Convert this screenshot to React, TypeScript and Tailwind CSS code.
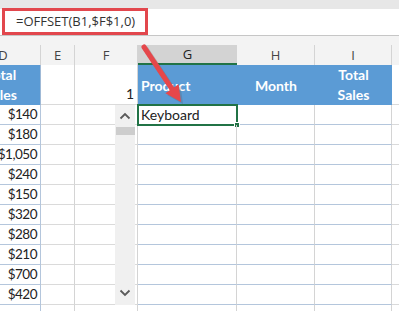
import React from 'react';

const sales = ['$140', '$180', '$1,050', '$240', '$150', '$320', '$280', '$210', '$700', '$420'];

const blueLine = 'border-b border-b-[#b4c6dc]';
const grayLine = 'border-b border-b-[#dadada]';

const App: React.FC = () => {
  return (
    <div className="relative w-[399px] h-[311px] overflow-hidden bg-white font-['Lato',sans-serif] text-[14px] text-[#222]">
      {/* Formula bar */}
      <div className="h-[36px] border-b border-[#c6c6c6] bg-[linear-gradient(#e7e7e7_0_9px,#ffffff_9px)] pt-[8px] pl-[2px]">
        <div className="w-[146px] h-[27px] border-[3px] border-[#e2474d] bg-white flex items-center pl-[11px] font-['Open_Sans',sans-serif] text-[13px] text-[#333]">
          =OFFSET(B1,$F$1,0)
        </div>
      </div>
      <div className="h-[9px] bg-[#f3f3f3]" />

      {/* Column headers */}
      <div className="flex h-[20px] bg-[#f3f3f3] font-['Open_Sans',sans-serif] text-[13px] text-[#444] leading-[20px]">
        <div className="w-[41px] overflow-hidden border-r border-[#d4d4d4]">
          <div className="w-[76px] ml-[-35px] text-center">D</div>
        </div>
        <div className="w-[34px] border-r border-[#d4d4d4] text-center">E</div>
        <div className="w-[63px] border-r border-[#d4d4d4] text-center">F</div>
        <div className="w-[99px] bg-[#d3d3d3] border-b-2 border-[#217346] text-center leading-[18px] text-[#222]">G</div>
        <div className="w-[78px] border-r border-[#d4d4d4] text-center">H</div>
        <div className="w-[77px] border-r border-[#d4d4d4] text-center">I</div>
        <div className="flex-1" />
      </div>

      {/* Row 1: headers */}
      <div className="flex h-[40px] font-bold text-white">
        <div className="w-[41px] overflow-hidden bg-[#5b9bd5] border-r border-[#9fb9d6]">
          <div className="w-[76px] ml-[-37px] text-center leading-[20px]">
            Total
            <br />
            Sales
          </div>
        </div>
        <div className={`w-[34px] border-r border-r-[#d4d4d4] ${grayLine}`} />
        <div className={`w-[63px] border-r border-r-[#d4d4d4] ${grayLine} flex items-end justify-end pr-[3px] font-normal text-[#222]`}>
          1
        </div>
        <div className="w-[99px] bg-[#5b9bd5] flex items-center pl-[3px]">Product</div>
        <div className="w-[78px] bg-[#5b9bd5] flex items-center justify-center">Month</div>
        <div className="w-[77px] bg-[#5b9bd5] text-center leading-[20px]">
          Total
          <br />
          Sales
        </div>
        <div className={`flex-1 ${grayLine}`} />
      </div>

      {/* Data rows */}
      {sales.map((value, i) => (
        <div key={value} className="flex h-[20px] leading-[19px]">
          <div className={`w-[41px] overflow-hidden border-r border-r-[#b4c6dc] ${blueLine} flex justify-end pr-[3px] whitespace-nowrap text-[13.5px] tracking-[-0.5px]`}>
            <span className="shrink-0">{value}</span>
          </div>
          <div className={`w-[34px] border-r border-r-[#d4d4d4] ${grayLine}`} />
          <div className={`w-[63px] border-r border-r-[#d4d4d4] ${grayLine}`} />
          <div className={`relative w-[99px] border-r border-r-[#d4d4d4] ${blueLine} pl-[3px]`}>
            {i === 0 && (
              <>
                <span>Keyboard</span>
                <div className="absolute left-[-1px] top-[-1px] w-[101px] h-[22px] border-2 border-[#217346]" />
                <div className="absolute right-[-4px] bottom-[-4px] w-[6px] h-[6px] bg-[#217346] border border-white" />
              </>
            )}
          </div>
          <div className={`w-[78px] border-r border-r-[#d4d4d4] ${blueLine}`} />
          <div className={`w-[77px] border-r border-r-[#d4d4d4] ${blueLine}`} />
          <div className={`flex-1 ${grayLine}`} />
        </div>
      ))}

      {/* Partial bottom row */}
      <div className="flex h-[6px]">
        <div className="w-[41px] border-r border-[#b4c6dc]" />
        <div className="w-[34px] border-r border-[#d4d4d4]" />
        <div className="w-[63px] border-r border-[#d4d4d4]" />
        <div className="w-[99px] border-r border-[#d4d4d4]" />
        <div className="w-[78px] border-r border-[#d4d4d4]" />
        <div className="w-[77px] border-r border-[#d4d4d4]" />
      </div>

      {/* List box scroll bar (form control over column F) */}
      <div className="absolute left-[115px] top-[105px] w-[20px] h-[200px] bg-[#f0f0f0] flex flex-col items-center">
        <svg width="12" height="8" viewBox="0 0 12 8" className="mt-[7px]">
          <polyline points="1.5,6.5 6,2 10.5,6.5" fill="none" stroke="#5a5a5a" strokeWidth="1.8" />
        </svg>
        <div className="mt-[7px] w-[19px] h-[8px] bg-[#cdcdcd]" />
        <div className="flex-1" />
        <svg width="12" height="8" viewBox="0 0 12 8" className="mb-[8px]">
          <polyline points="1.5,1.5 6,6 10.5,1.5" fill="none" stroke="#5a5a5a" strokeWidth="1.8" />
        </svg>
      </div>

      {/* Red callout arrow */}
      <svg className="absolute left-0 top-0 pointer-events-none" width="399" height="311" viewBox="0 0 399 311">
        <g opacity="0.25" transform="translate(2,2)">
          <line x1="144" y1="47" x2="172" y2="89" stroke="#555" strokeWidth="5" strokeLinecap="round" />
          <polygon points="165.4,93.2 178.6,84.2 181,102" fill="#555" />
        </g>
        <line x1="144" y1="47" x2="172" y2="89" stroke="#e5474b" strokeWidth="5" strokeLinecap="round" />
        <polygon points="165.4,93.2 178.6,84.2 181,102" fill="#e5474b" />
      </svg>
    </div>
  );
};

export default App;
